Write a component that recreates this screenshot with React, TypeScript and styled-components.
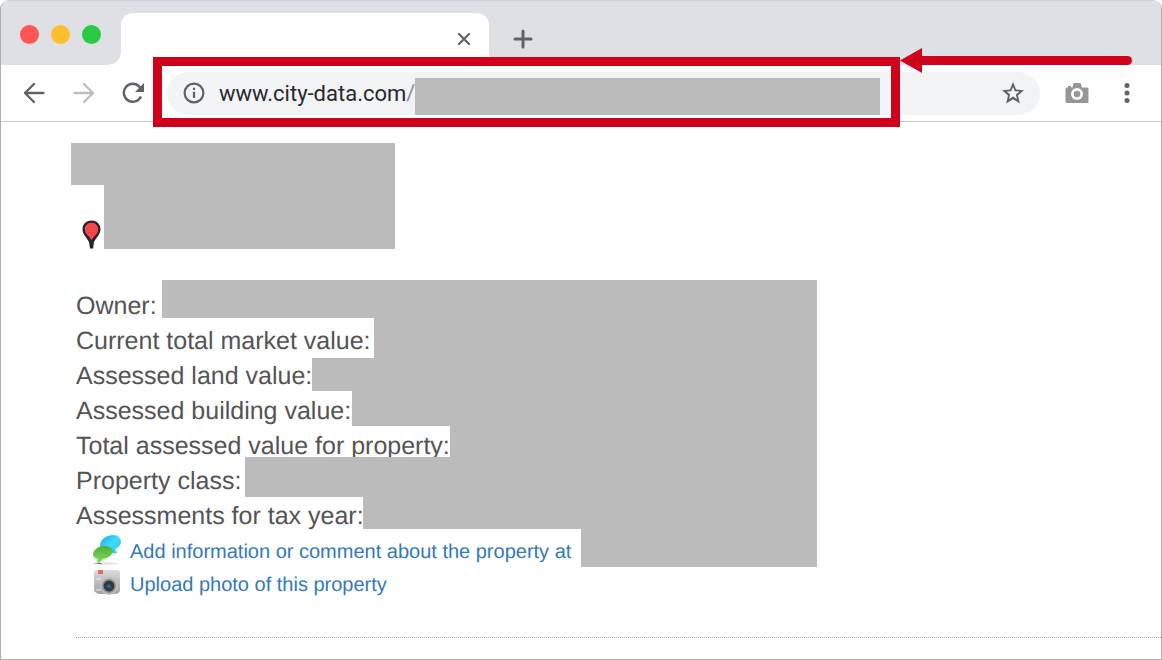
import React from "react";
import styled, { createGlobalStyle } from "styled-components";

const RED = "#d0021b";
const REDACTED = "#bbbbbb";
const INK = "#5f6368";

const GlobalStyle = createGlobalStyle`
  *, *::before, *::after { box-sizing: border-box; }
  body {
    margin: 0;
    background: #fff;
    font-family: "Liberation Sans", Arial, sans-serif;
    text-rendering: geometricPrecision;
  }
`;

const BrowserWindow = styled.div`
  display: flex;
  flex-direction: column;
  min-height: 100vh;
  border: 1px solid #aeaeae;
  border-top-color: #cfd0d3;
  border-radius: 9px 9px 0 0;
  background: #fff;
  overflow: hidden;
`;

const TabStrip = styled.header`
  display: flex;
  align-items: flex-end;
  height: 64px;
  background: #dee0e5;
`;

const WindowControls = styled.div`
  display: flex;
  align-self: stretch;
  align-items: center;
  gap: 12px;
  width: 120px;
  padding: 2px 0 0 19px;
`;

const ControlDot = styled.button<{ $color: string }>`
  width: 19px;
  height: 19px;
  padding: 0;
  border: 0;
  border-radius: 50%;
  background: ${(p) => p.$color};
`;

const Tab = styled.div`
  position: relative;
  display: flex;
  align-items: center;
  justify-content: flex-end;
  width: 368px;
  height: 52px;
  padding-right: 10px;
  border-radius: 12px 12px 0 0;
  background: #fff;

  &::before {
    content: "";
    position: absolute;
    left: -12px;
    bottom: 0;
    width: 12px;
    height: 12px;
    background: radial-gradient(circle at 0 0, transparent 11px, #fff 12px);
  }
`;

const IconButton = styled.button`
  display: flex;
  flex: none;
  align-items: center;
  justify-content: center;
  width: 36px;
  height: 36px;
  padding: 0;
  border: 0;
  background: none;
  color: ${INK};

  svg { display: block; }
`;

const TabButton = styled(IconButton)`
  width: 30px;
  height: 52px;
`;

const NewTabButton = styled(TabButton)`
  margin-left: 19px;
`;

const Toolbar = styled.nav`
  position: relative;
  display: flex;
  align-items: center;
  gap: 14px;
  height: 57px;
  padding: 0 16px 0 15px;
  border-bottom: 1px solid #c9c9c9;
`;

const AddressBar = styled.div`
  position: relative;
  display: flex;
  flex: 1;
  align-items: center;
  height: 43px;
  margin: 0 5px 0 1px;
  padding: 0 9px;
  border-radius: 22px;
  background: #f1f3f4;
`;

const AddressText = styled.label`
  display: flex;
  flex: 1;
  align-items: center;
  min-width: 0;
  padding: 2px 0 0 7px;
  font-family: Roboto, "Liberation Sans", sans-serif;
  font-size: 22px;
  line-height: 28px;
  color: #8b8e91;
`;

const AddressInput = styled.input`
  field-sizing: content;
  padding: 0;
  border: 0;
  outline: 0;
  background: none;
  color: #28292c;
  font: inherit;
`;

const AddressRedaction = styled.div`
  position: absolute;
  top: 6px;
  right: 160px;
  bottom: 0;
  left: 248px;
  background: ${REDACTED};
`;

const CalloutBox = styled.div`
  position: absolute;
  top: -15px;
  right: 140px;
  bottom: -12px;
  left: -14px;
  border: 9px solid ${RED};
  pointer-events: none;
`;

const CalloutArrow = styled.svg`
  position: absolute;
  top: -17px;
  right: 28px;
  pointer-events: none;
`;

const Page = styled.main`
  padding: 21px 0 21px 70px;
`;

const TitleRedaction = styled.div`
  width: 324px;
  height: 42px;
  background: ${REDACTED};
`;

const PlaceRow = styled.div`
  display: flex;
  align-items: flex-end;
  width: 324px;
  height: 64px;
`;

const PinSlot = styled.div`
  display: flex;
  width: 33px;
  padding-left: 10px;
`;

const PlaceRedaction = styled.div`
  flex: 1;
  align-self: stretch;
  background: ${REDACTED};
`;

const Details = styled.section`
  position: relative;
  margin-top: 31px;
  padding: 9px 0 0 5px;
`;

const Facts = styled.ul`
  margin: 0;
  padding: 0;
  list-style: none;
  color: #545454;
  font-size: 25px;
  line-height: 35px;
  white-space: nowrap;
`;

const Actions = styled.ul`
  margin: 0;
  padding: 2px 0 0 16px;
  list-style: none;
`;

const Action = styled.li`
  display: flex;
  align-items: center;
  gap: 10px;
  height: 33px;
  font-size: 20px;
  white-space: nowrap;

  svg { flex: none; overflow: visible; }
`;

const ActionLink = styled.a`
  color: #337ab7;
  text-decoration: none;
`;

const RedactionStack = styled.div`
  position: absolute;
  top: 0;
  left: 0;
  display: flex;
  flex-direction: column;
  width: 746px;
`;

const RedactionStep = styled.div<{ $from: number; $height: number }>`
  height: ${(p) => p.$height}px;
  margin-left: ${(p) => p.$from}px;
  background: ${REDACTED};
`;

const Divider = styled.hr`
  margin: 35px 0 0 5px;
  border: 0;
  border-top: 1px dotted #a0a0a0;
`;

const facts = [
  "Owner:",
  "Current total market value:",
  "Assessed land value:",
  "Assessed building value:",
  "Total assessed value for property:",
  "Property class:",
  "Assessments for tax year:",
];

const redactions = [
  { from: 91, height: 38 },
  { from: 303, height: 40 },
  { from: 241, height: 33 },
  { from: 281, height: 35 },
  { from: 379, height: 31 },
  { from: 174, height: 40 },
  { from: 292, height: 32 },
  { from: 510, height: 38 },
];

const CommentIcon = () => (
  <svg width="28" height="32" viewBox="0 0 28 32" aria-hidden="true">
    <defs>
      <linearGradient id="blueBubble" x1="0" y1="0" x2="1" y2="1">
        <stop offset="0" stopColor="#1f9fdc" />
        <stop offset="0.500" stopColor="#3fdcfb" />
        <stop offset="1" stopColor="#35b9ee" />
      </linearGradient>
      <linearGradient id="greenBubble" x1="0" y1="0" x2="0" y2="1">
        <stop offset="0" stopColor="#4dae3a" />
        <stop offset="1" stopColor="#86e05c" />
      </linearGradient>
    </defs>
    <ellipse cx="14" cy="26.500" rx="13" ry="1.500" fill="#e8e8e8" />
    <path d="M1 27l7-1 3 1Z" fill="#555" />
    <path d="M8 9C8 3 14-2 21-2c5 0 8 3 8 7-1 4-3 6-6 7l2 4c-4 1-7 0-9-3C12 13 8 12 8 9Z" fill="url(#blueBubble)" />
    <path d="M1 18c0-5 5-9 11-9 5 0 9 2 9 5-1 4-4 7-10 8l-5 5c-1-2-1-4 0-5-3-1-5-2-5-4Z" fill="url(#greenBubble)" />
  </svg>
);

const PhotoIcon = () => (
  <svg width="28" height="32" viewBox="0 0 28 32" aria-hidden="true">
    <defs>
      <linearGradient id="cameraBody" x1="0" y1="0" x2="0" y2="1">
        <stop offset="0" stopColor="#dadada" />
        <stop offset="1" stopColor="#a2a2a2" />
      </linearGradient>
    </defs>
    <path d="M6 0h19q3 0 3 4v16q0 3-4 4H7q-4-1-5-4V4q0-4 4-4Z" fill="url(#cameraBody)" />
    <path d="M4 9h5M4 20h5" stroke="#eee" />
    <rect x="6" y="0" width="5" height="4" rx="1" fill="#df6b62" />
    <circle cx="17" cy="16" r="9" fill="#bdbdbd" />
    <circle cx="17" cy="16" r="7" fill="#8c8c8c" />
    <circle cx="17" cy="16" r="5.400" fill="#34373c" />
    <path d="M14 17l3-3 3 4Z" fill="#1e73a5" />
  </svg>
);

export default function App() {
  return (
    <>
      <GlobalStyle />
      <BrowserWindow>
        <TabStrip>
          <WindowControls>
            <ControlDot $color="#fe5652" aria-label="Close window" />
            <ControlDot $color="#ffbe2c" aria-label="Minimize window" />
            <ControlDot $color="#2acb42" aria-label="Zoom window" />
          </WindowControls>
          <Tab>
            <TabButton aria-label="Close tab">
              <svg width="14" height="14" viewBox="0 0 14 14" stroke="currentColor" strokeWidth="2.200" strokeLinecap="round">
                <path d="M2 2l10 10M12 2L2 12" />
              </svg>
            </TabButton>
          </Tab>
          <NewTabButton aria-label="New tab">
            <svg width="20" height="20" viewBox="0 0 20 20" stroke="currentColor" strokeWidth="3" strokeLinecap="round">
              <path d="M10 2v16M2 10h16" />
            </svg>
          </NewTabButton>
        </TabStrip>

        <Toolbar aria-label="Browser toolbar">
          <IconButton aria-label="Back">
            <svg width="22" height="22" viewBox="0 0 22 22" fill="none" stroke="currentColor" strokeWidth="2.300" strokeLinecap="round" strokeLinejoin="round">
              <path d="M20.500 11H2M11 2L2 11l9 9" />
            </svg>
          </IconButton>
          <IconButton aria-label="Forward" disabled>
            <svg width="22" height="22" viewBox="0 0 22 22" fill="none" stroke="#bcbdbf" strokeWidth="2.300" strokeLinecap="round" strokeLinejoin="round">
              <path d="M1.500 11H20M11 2l9 9-9 9" />
            </svg>
          </IconButton>
          <IconButton aria-label="Reload">
            <svg width="24" height="22" viewBox="0 0 24 22" fill="none" stroke="currentColor" strokeWidth="2.500">
              <path d="M19 14.500A9 9 0 1 1 17.500 4.800l2 2" />
              <path d="M22 1v9h-9Z" fill="currentColor" stroke="none" />
            </svg>
          </IconButton>
          <AddressBar>
            <IconButton aria-label="Site information">
              <svg width="22" height="22" viewBox="0 0 22 22" fill="none" stroke="currentColor" strokeWidth="2.200">
                <circle cx="11" cy="11" r="9.400" />
                <path d="M11 9.800v6.200M11 5.800v2.200" />
              </svg>
            </IconButton>
            <AddressText>
              <AddressInput type="text" aria-label="Address" defaultValue="www.city-data.com" spellCheck={false} />
              <span>/</span>
            </AddressText>
            <IconButton aria-label="Bookmark this page">
              <svg width="24" height="24" viewBox="0 0 24 24" fill="currentColor">
                <path fillRule="evenodd" d="M23 9.200l-7.900-.7L12 1 8.900 8.500 1 9.200l6 5.200L5.200 22.500 12 18.200l6.800 4.300L17 14.400ZM12 15.600l-3.900 2.500 1-4.500-3.400-3 4.500-.4L12 6.100l1.800 4.100 4.500.4-3.400 3 1 4.500z" />
              </svg>
            </IconButton>
            <AddressRedaction />
            <CalloutBox />
          </AddressBar>
          <IconButton aria-label="Take screenshot">
            <svg width="24" height="22" viewBox="0 0 24 22" fill="#969696">
              <path d="M2 5.500h1V4h3v1.500h1.500L8.500 1h7l1.500 4.500h5q1.500 0 1.500 1.500v12.500Q23.500 21 22 21H2Q.5 21 .5 19.500V7Q.5 5.500 2 5.500Z" />
              <circle cx="12" cy="12" r="6" fill="#fff" />
              <circle cx="12" cy="12" r="3.300" />
            </svg>
          </IconButton>
          <IconButton aria-label="Browser menu">
            <svg width="6" height="22" viewBox="0 0 6 22" fill="currentColor">
              <circle cx="3" cy="3.500" r="2.500" />
              <circle cx="3" cy="11" r="2.500" />
              <circle cx="3" cy="18.500" r="2.500" />
            </svg>
          </IconButton>
          <CalloutArrow width="234" height="26" viewBox="0 0 234 26" fill={RED} aria-hidden="true">
            <path d="M1 12.500L23 0v25Z" />
            <path d="M22 8h206.500a4.500 4.500 0 0 1 0 9H22Z" />
          </CalloutArrow>
        </Toolbar>

        <Page>
          <TitleRedaction />
          <PlaceRow>
            <PinSlot>
              <svg width="20" height="29" viewBox="0 0 20 29" role="img" aria-label="Map pin">
                <path d="M10.500 .5c5.500 0 9 4 9 8.700 0 5.300-4.500 8.300-6.500 12.800L12.200 28.500H9L8 22C6 17.500 1.500 14.500 1.500 9.200c0-4.700 3.500-8.700 9-8.700Z" fill="#2b2528" />
                <path d="M10.500 2.800c4 0 6.600 2.900 6.600 6.600 0 4.300-4.400 6.600-6.600 10.600C8.300 16 3.900 13.700 3.900 9.400c0-3.700 2.600-6.600 6.600-6.600Z" fill="#f94a50" />
                <path d="M7 7h1m2 0h1m2 0h1M5.500 10h1m2 0h1m2 0h1m2 0h1M7 13h1m2 0h1m2 0h1M10 16h1" stroke="#c9303a" />
              </svg>
            </PinSlot>
            <PlaceRedaction />
          </PlaceRow>

          <Details>
            <Facts>
              {facts.map((fact) => (
                <li key={fact}>{fact}</li>
              ))}
            </Facts>
            <Actions>
              <Action>
                <CommentIcon />
                <ActionLink href="#comment">Add information or comment about the property at</ActionLink>
              </Action>
              <Action>
                <PhotoIcon />
                <ActionLink href="#upload">Upload photo of this property</ActionLink>
              </Action>
            </Actions>
            <RedactionStack>
              {redactions.map((r) => (
                <RedactionStep key={r.from} $from={r.from} $height={r.height} />
              ))}
            </RedactionStack>
          </Details>
          <Divider />
        </Page>
      </BrowserWindow>
    </>
  );
}
